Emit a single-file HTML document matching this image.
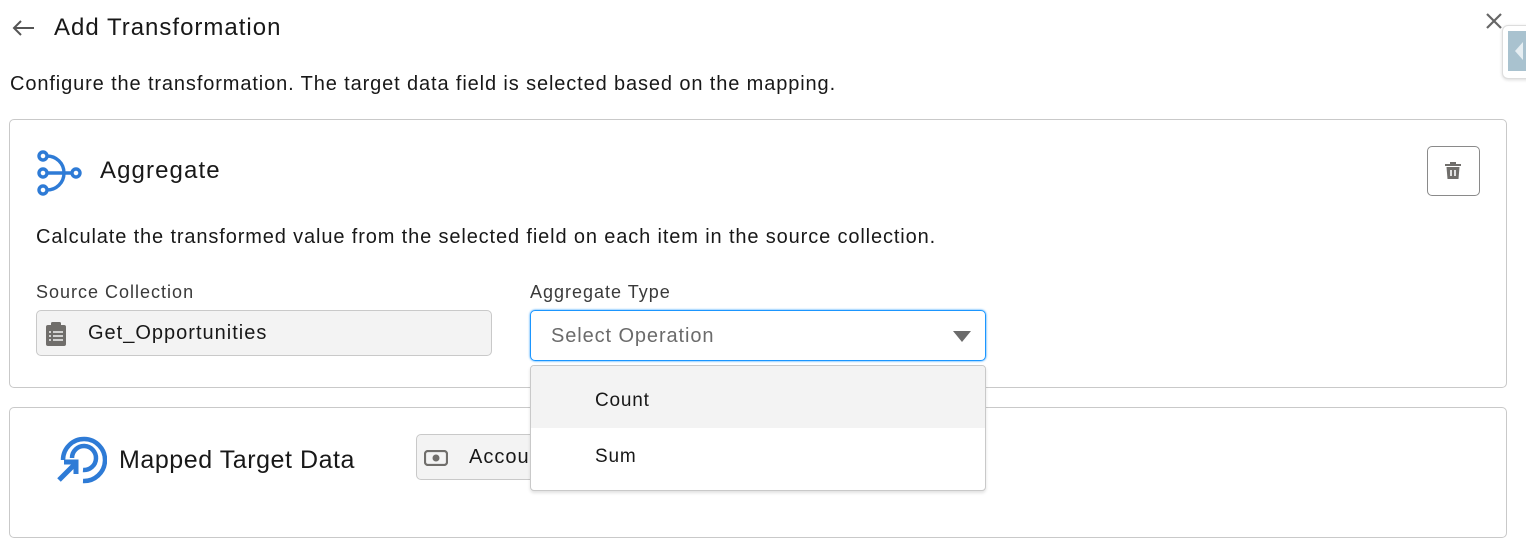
<!DOCTYPE html>
<html><head><style>
body{margin:0;width:1526px;height:550px;background:#fff;font-family:"Liberation Sans",sans-serif;color:#181818;position:relative;overflow:hidden}
.a{position:absolute;white-space:nowrap}
.box{position:absolute;border:1px solid #c9c9c9;border-radius:5px;background:#fff}
</style></head><body>
<svg class="a" style="left:10px;top:18px" width="26" height="20"><path d="M24 10H4M11 3L4 10l7 7" stroke="#555" stroke-width="2" fill="none"/></svg>
<div class="a" style="left:54px;top:14px;font-size:24px;letter-spacing:1px">Add Transformation</div>
<svg class="a" style="left:1485px;top:12px" width="18" height="18"><path d="M2 2L16 16M16 2L2 16" stroke="#666" stroke-width="2.2"/></svg>
<div class="a" style="left:1502px;top:25px;width:30px;height:52px;border:1px solid #ddd;border-radius:6px;background:#fff;box-shadow:0 1px 3px rgba(0,0,0,.15)"></div>
<div class="a" style="left:1508px;top:31px;width:20px;height:40px;background:#a9c2cf"></div>
<svg class="a" style="left:1513px;top:42px" width="10" height="18"><path d="M10 0L2 9L10 18Z" fill="#e6eef2"/></svg>
<div class="a" style="left:10px;top:73px;font-size:20px;letter-spacing:0.88px">Configure the transformation. The target data field is selected based on the mapping.</div>

<div class="box" style="left:9px;top:119px;width:1496px;height:267px"></div>
<svg class="a" style="left:34px;top:149px" width="50" height="48" viewBox="0 0 50 48"><g stroke="#2e7bd6" stroke-width="3.4" fill="none"><circle cx="9" cy="7" r="4"/><circle cx="9" cy="24" r="4"/><circle cx="9" cy="41" r="4"/><circle cx="42" cy="24" r="4"/><path d="M13 7C22 7 30 14 30 24S22 41 13 41M13 24H38"/></g></svg>
<div class="a" style="left:100px;top:157px;font-size:24px;letter-spacing:1.1px">Aggregate</div>
<div class="a" style="left:1427px;top:146px;width:51px;height:48px;border:1px solid #8a8a8a;border-radius:5px"></div>
<svg class="a" style="left:1444px;top:160px" width="18" height="20"><path d="M6 2h6v2h5v2H1V4h5z" fill="#706e6b"/><path d="M2.5 7h13l-1 12h-11z" fill="#706e6b"/><path d="M7 10v6M11 10v6" stroke="#fff" stroke-width="1.6"/></svg>
<div class="a" style="left:36px;top:226px;font-size:20px;letter-spacing:0.87px">Calculate the transformed value from the selected field on each item in the source collection.</div>
<div class="a" style="left:36px;top:282px;font-size:18px;letter-spacing:1px;color:#3a3a3a">Source Collection</div>
<div class="a" style="left:36px;top:310px;width:454px;height:44px;background:#f3f3f3;border:1px solid #c9c9c9;border-radius:5px"></div>
<svg class="a" style="left:45px;top:322px" width="22" height="24"><rect x="1" y="3" width="20" height="21" rx="2" fill="#706e6b"/><rect x="6" y="0" width="10" height="5" rx="1.5" fill="#706e6b"/><g stroke="#f3f3f3" stroke-width="1.6"><path d="M4 10h2M4 14h2M4 18h2M8 10h10M8 14h10M8 18h10"/></g></svg>
<div class="a" style="left:88px;top:322px;font-size:20px;letter-spacing:1px">Get_Opportunities</div>
<div class="a" style="left:530px;top:282px;font-size:18px;letter-spacing:1px;color:#3a3a3a">Aggregate Type</div>
<div class="a" style="left:530px;top:310px;width:454px;height:49px;border:1px solid #1b96ff;border-radius:5px;box-shadow:0 0 2px #1b96ff"></div>
<div class="a" style="left:551px;top:325px;font-size:20px;letter-spacing:0.9px;color:#6b6b6b">Select Operation</div>
<svg class="a" style="left:953px;top:331px" width="18" height="11"><path d="M0 0h18L9 11z" fill="#6b6b6b"/></svg>

<div class="box" style="left:9px;top:407px;width:1496px;height:129px"></div>
<svg class="a" style="left:55px;top:434px" width="52" height="50" viewBox="0 0 52 50"><g fill="none" stroke="#2e7bd6" stroke-width="4.5"><path d="M8 26A21 21 0 1 1 28 47"/><path d="M17 24A12 12 0 1 1 28 36"/></g><path d="M4 46L20 30M9 28h12v12" stroke="#2e7bd6" stroke-width="5" fill="none"/></svg>
<div class="a" style="left:119px;top:446px;font-size:25px;letter-spacing:0.55px">Mapped Target Data</div>
<div class="a" style="left:416px;top:434px;width:140px;height:44px;background:#f3f3f3;border:1px solid #c9c9c9;border-radius:5px"></div>
<svg class="a" style="left:424px;top:450px" width="24" height="16"><rect x="1" y="1" width="22" height="14" rx="3" fill="none" stroke="#706e6b" stroke-width="2.2"/><circle cx="12" cy="8" r="3.5" fill="#706e6b"/></svg>
<div class="a" style="left:469px;top:446px;font-size:20px;letter-spacing:1px">Accou</div>

<div class="a" style="left:530px;top:365px;width:454px;height:124px;background:#fff;border:1px solid #c9c9c9;border-radius:4px;box-shadow:0 2px 3px rgba(0,0,0,.12);overflow:hidden">
<div style="height:62px;background:#f3f3f3"></div></div>
<div class="a" style="left:595px;top:390px;font-size:19px;letter-spacing:0.8px">Count</div>
<div class="a" style="left:595px;top:446px;font-size:19px;letter-spacing:0.8px">Sum</div>
</body></html>
